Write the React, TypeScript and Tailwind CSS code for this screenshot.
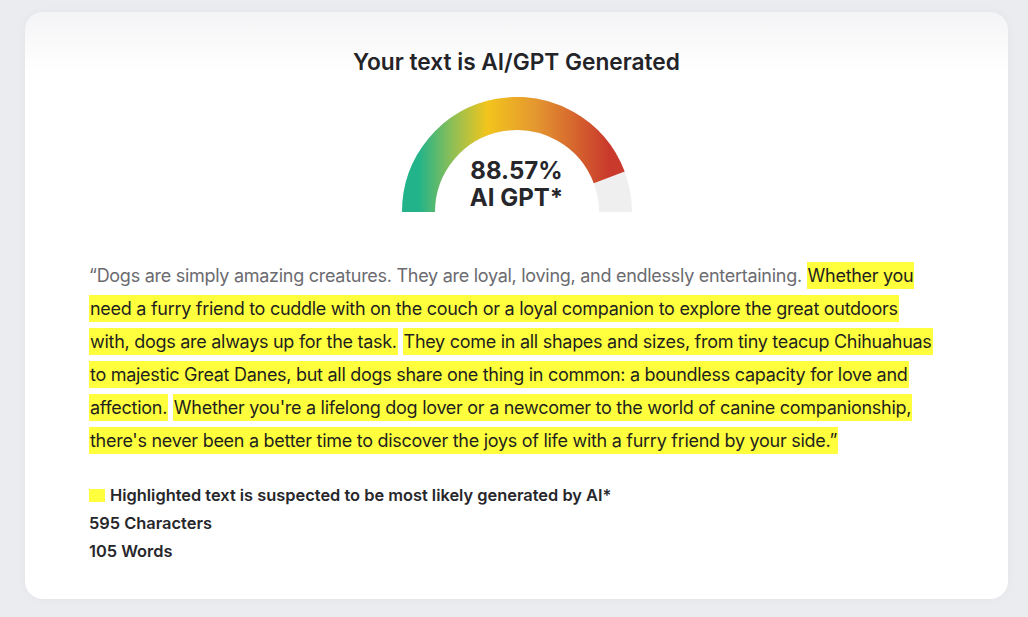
import React from 'react';

const Hl: React.FC<{ children: React.ReactNode }> = ({ children }) => (
  <span className="bg-[#ffff3d] text-[#1f1f1f] py-[3px] px-[1px] [box-decoration-break:clone]">{children}</span>
);

const Gauge: React.FC<{ value: number }> = ({ value }) => {
  const r = 98.5;
  const a = Math.PI * (1 - value / 100);
  const ex = 115 + r * Math.cos(a);
  const ey = 115 - r * Math.sin(a);
  return (
    <div className="relative w-[230px] h-[115px]">
      <svg width="230" height="115" viewBox="0 0 230 115">
        <defs>
          <linearGradient id="g" x1="0" y1="0" x2="1" y2="0">
            <stop offset="0" stopColor="#22b38a" />
            <stop offset="0.18" stopColor="#8fbf55" />
            <stop offset="0.36" stopColor="#f2c51c" />
            <stop offset="0.62" stopColor="#e49630" />
            <stop offset="1" stopColor="#c9392c" />
          </linearGradient>
        </defs>
        <path d="M 16.5 115 A 98.5 98.5 0 0 1 213.5 115" fill="none" stroke="#efefef" strokeWidth="33" />
        <path d={`M 16.5 115 A 98.5 98.5 0 0 1 ${ex} ${ey}`} fill="none" stroke="url(#g)" strokeWidth="33" />
      </svg>
      <div className="absolute left-0 right-0 bottom-[1px] text-center font-bold text-[24px] leading-[27px] text-[#26262b]">
        <div>{value}%</div>
        <div>AI GPT*</div>
      </div>
    </div>
  );
};

const App: React.FC = () => {
  return (
    <div className="min-h-screen bg-[#ebecef] pt-[12px] pb-[18px] pl-[25px] pr-[20px] font-['Inter','Liberation_Sans',sans-serif]">
      <div className="h-[587px] rounded-[18px] bg-[linear-gradient(to_bottom,#f4f4f6,#ffffff_60px)] shadow-[0_0_10px_rgba(0,0,0,0.04)] px-[64px] pt-[36px]">
        <h1 className="text-center text-[22.7px] leading-[28px] font-semibold text-[#232328]">Your text is AI/GPT Generated</h1>
        <div className="flex justify-center mt-[21px]">
          <Gauge value={88.57} />
        </div>
        <p className="mt-[47px] max-w-[847px] text-[18px] leading-[33px] text-[#6b6b70] tracking-[-0.28px]">
          “Dogs are simply amazing creatures. They are loyal, loving, and endlessly entertaining.{' '}
          <Hl>Whether you need a furry friend to cuddle with on the couch or a loyal companion to explore the great outdoors with, dogs are always up for the task.</Hl>{' '}
          <Hl>They come in all shapes and sizes, from tiny teacup Chihuahuas to majestic Great Danes, but all dogs share one thing in common: a boundless capacity for love and affection.</Hl>{' '}
          <Hl>Whether you're a lifelong dog lover or a newcomer to the world of canine companionship, there's never been a better time to discover the joys of life with a furry friend by your side.”</Hl>
        </p>
        <div className="mt-[24px] text-[16.4px] leading-[28px] font-semibold text-[#27272b]">
          <div className="flex items-center gap-[5px]">
            <span className="inline-block w-[16px] h-[13px] bg-[#ffff3d]" />
            <span>Highlighted text is suspected to be most likely generated by AI*</span>
          </div>
          <div>595 Characters</div>
          <div>105 Words</div>
        </div>
      </div>
    </div>
  );
};

export default App;
